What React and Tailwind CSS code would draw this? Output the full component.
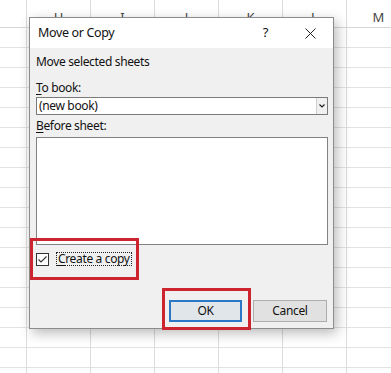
const cols = ["", "H", "I", "J", "K", "L", "M"];
const rows = Array.from({ length: 18 }, (_, i) => i);

function Mn({ c }) {
  return <span className="underline underline-offset-2 decoration-1">{c}</span>;
}

export default function App() {
  return (
    <div
      className="relative w-[391px] h-[373px] overflow-hidden bg-white text-[#111]"
      style={{ fontFamily: '"Noto Sans", "Open Sans", sans-serif' }}
    >
      {/* sheet grid behind the dialog */}
      <div className="flex -ml-[37px]">
        {cols.map((c, i) => (
          <div key={i} className="w-[64px] shrink-0 border-r border-[#dcdcdc]">
            <div className="h-[28px] border-b border-[#d6d6d6] pt-[9px] text-center text-[13px] leading-[16px] text-[#444]">
              {c}
            </div>
            {rows.map((r) => (
              <div key={r} className="h-[20px] border-b border-[#e2e2e2]" />
            ))}
          </div>
        ))}
      </div>

      {/* dialog */}
      <div className="absolute left-[29px] top-[17px] w-[305px] h-[312px] border border-[#8c8c8c] bg-[#f0f0f0] shadow-[3px_4px_12px_rgba(0,0,0,0.28)] text-[12px] tracking-[-0.35px]">
        <div className="h-[30px] bg-white flex items-center pl-[8px] pr-[17px]">
          <span className="text-[12.5px]">Move or Copy</span>
          <span className="ml-auto text-[13px]">?</span>
          <svg className="ml-[37px]" width="11" height="11" viewBox="0 0 11 11">
            <path d="M0.5 0.5 L10.5 10.5 M10.5 0.5 L0.5 10.5" stroke="#222" strokeWidth="1" />
          </svg>
        </div>

        <div className="px-[6px]">
          <div className="mt-[6px] leading-[16px]">Move selected sheets</div>
          <div className="mt-[10px] leading-[16px]">
            <Mn c="T" />o book:
          </div>
          <div className="mt-[1px] h-[18px] w-[292px] border border-[#7a7a7a] bg-white flex">
            <div className="flex-1 pl-[2px] leading-[16px]">(new book)</div>
            <div className="w-[11px] border-l border-[#cfcfcf] bg-[#f0f0f0] flex items-center justify-center">
              <svg width="6" height="4" viewBox="0 0 6 4">
                <path d="M0.5 0.5 L3 3 L5.5 0.5" stroke="#222" strokeWidth="1.2" fill="none" />
              </svg>
            </div>
          </div>
          <div className="mt-[3px] leading-[16px]">
            <Mn c="B" />efore sheet:
          </div>
          <div className="mt-[3px] h-[108px] w-[292px] border border-[#828282] bg-white" />

          <div className="mt-[7px] flex items-center h-[14px]">
            <div className="w-[13px] h-[13px] border border-[#333] bg-white flex items-center justify-center">
              <svg width="11" height="11" viewBox="0 0 11 11">
                <path d="M1.5 5.5 L4 8 L9.5 2.5" stroke="#333" strokeWidth="1.1" fill="none" />
              </svg>
            </div>
            <span className="ml-[7px] border border-dotted border-[#222] px-[1px] leading-[12px]">
              <Mn c="C" />reate a copy
            </span>
          </div>

          <div className="mt-[34px] flex justify-end gap-[11px]">
            <button className="w-[73px] h-[22px] border-2 border-[#2a78c6] bg-[#e1e6ea] text-[12px] leading-[16px]">
              OK
            </button>
            <button className="w-[74px] h-[22px] border border-[#adadad] bg-[#e1e1e1] text-[12px] leading-[16px]">
              Cancel
            </button>
          </div>
        </div>
      </div>

      {/* red annotation boxes */}
      <div className="absolute left-[30px] top-[238px] w-[109px] h-[42px] border-[3px] border-[#cc2530]" />
      <div className="absolute left-[162px] top-[288px] w-[89px] h-[42px] border-[3px] border-[#cc2530]" />
    </div>
  );
}
